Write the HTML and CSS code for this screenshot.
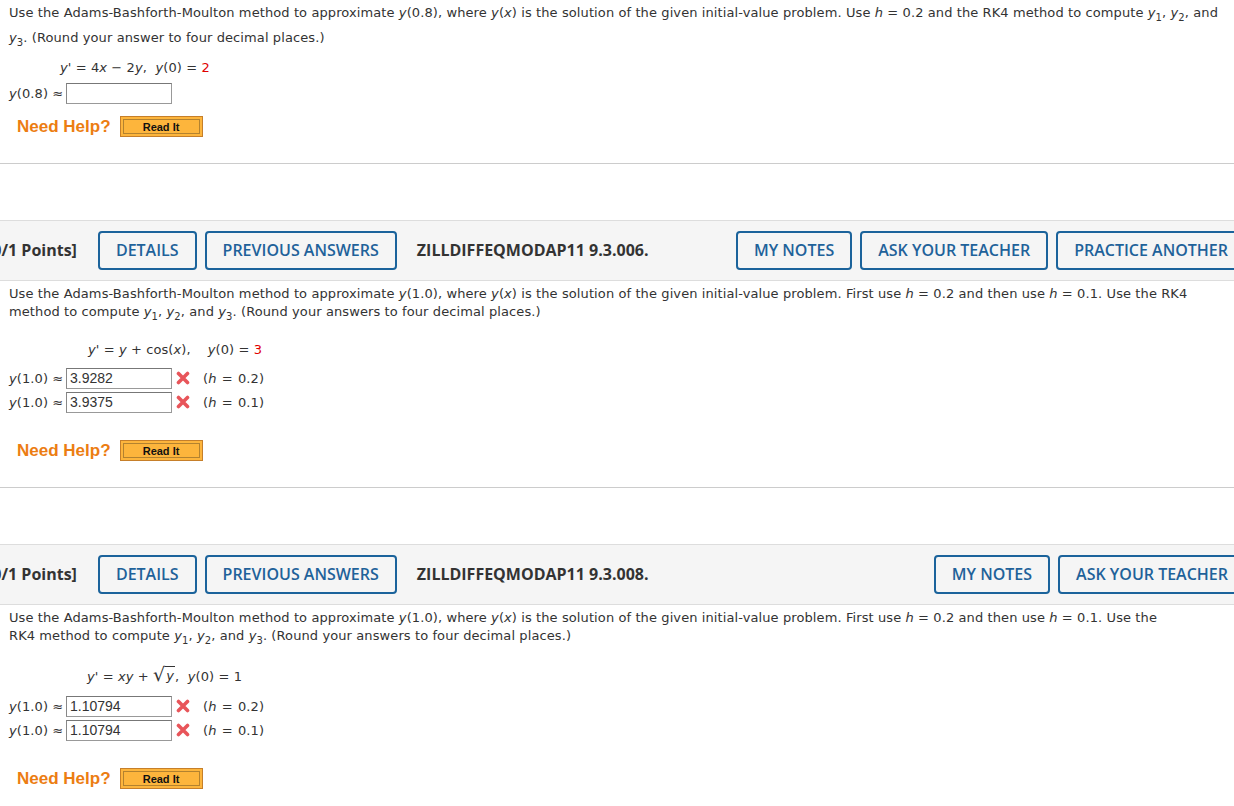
FILE: index.html
```html
<!DOCTYPE html>
<html>
<head>
<meta charset="utf-8">
<link rel="stylesheet" href="styles.css">
</head>
<body>
<div class="page">

  <section class="question q-first">
    <p class="prompt prompt-tall">Use the Adams-Bashforth-Moulton method to approximate <i>y</i>(0.8), where <i>y</i>(<i>x</i>) is the solution of the given initial-value problem. Use <i>h</i> = 0.2 and the RK4 method to compute <i>y</i><sub>1</sub>, <i>y</i><sub>2</sub>, and<br><i>y</i><sub>3</sub>. (Round your answer to four decimal places.)</p>
    <div class="equation eq-1"><i>y</i>' = 4<i>x</i> &minus; 2<i>y</i>,&nbsp; <i>y</i>(0) = <span class="given">2</span></div>
    <div class="answer-row row-first">
      <span class="lbl"><i>y</i>(0.8) &asymp;</span>
      <input class="field" type="text" value="">
    </div>
    <div class="help">
      <span class="help-title">Need Help?</span>
      <span class="read-it"><span class="read-inner">Read It</span></span>
    </div>
  </section>

  <div class="band">
    <span class="points">[0/1 Points]</span>
    <span class="btn">DETAILS</span>
    <span class="btn">PREVIOUS ANSWERS</span>
    <span class="code">ZILLDIFFEQMODAP11 9.3.006.</span>
    <span class="btn push">MY NOTES</span>
    <span class="btn">ASK YOUR TEACHER</span>
    <span class="btn">PRACTICE ANOTHER</span>
  </div>

  <section class="question">
    <p class="prompt">Use the Adams-Bashforth-Moulton method to approximate <i>y</i>(1.0), where <i>y</i>(<i>x</i>) is the solution of the given initial-value problem. First use <i>h</i> = 0.2 and then use <i>h</i> = 0.1. Use the RK4<br>method to compute <i>y</i><sub>1</sub>, <i>y</i><sub>2</sub>, and <i>y</i><sub>3</sub>. (Round your answers to four decimal places.)</p>
    <div class="equation eq-2"><i>y</i>' = <i>y</i> + cos(<i>x</i>), &nbsp;&nbsp;&nbsp;<i>y</i>(0) = <span class="given">3</span></div>
    <div class="answers">
      <div class="answer-row">
        <span class="lbl"><i>y</i>(1.0) &asymp;</span>
        <input class="field" type="text" value="3.9282">
        <svg class="wrong" width="14" height="14" viewBox="0 0 14 14"><path d="M2.5 2.5 L11.5 11.5 M11.5 2.5 L2.5 11.5" stroke="#e8555a" stroke-width="3.6" stroke-linecap="round"/></svg>
        <span class="hint">(<i>h</i> = 0.2)</span>
      </div>
      <div class="answer-row">
        <span class="lbl"><i>y</i>(1.0) &asymp;</span>
        <input class="field" type="text" value="3.9375">
        <svg class="wrong" width="14" height="14" viewBox="0 0 14 14"><path d="M2.5 2.5 L11.5 11.5 M11.5 2.5 L2.5 11.5" stroke="#e8555a" stroke-width="3.6" stroke-linecap="round"/></svg>
        <span class="hint">(<i>h</i> = 0.1)</span>
      </div>
    </div>
    <div class="help">
      <span class="help-title">Need Help?</span>
      <span class="read-it"><span class="read-inner">Read It</span></span>
    </div>
  </section>

  <div class="band">
    <span class="points">[0/1 Points]</span>
    <span class="btn">DETAILS</span>
    <span class="btn">PREVIOUS ANSWERS</span>
    <span class="code">ZILLDIFFEQMODAP11 9.3.008.</span>
    <span class="btn push">MY NOTES</span>
    <span class="btn">ASK YOUR TEACHER</span>
  </div>

  <section class="question q-last">
    <p class="prompt">Use the Adams-Bashforth-Moulton method to approximate <i>y</i>(1.0), where <i>y</i>(<i>x</i>) is the solution of the given initial-value problem. First use <i>h</i> = 0.2 and then use <i>h</i> = 0.1. Use the<br>RK4 method to compute <i>y</i><sub>1</sub>, <i>y</i><sub>2</sub>, and <i>y</i><sub>3</sub>. (Round your answers to four decimal places.)</p>
    <div class="equation eq-3"><i>y</i>' = <i>xy</i> + <span class="sqrt"><span class="radical">&radic;</span><span class="radicand"><i>y</i></span></span>,&nbsp; <i>y</i>(0) = 1</div>
    <div class="answers answers-3">
      <div class="answer-row">
        <span class="lbl"><i>y</i>(1.0) &asymp;</span>
        <input class="field" type="text" value="1.10794">
        <svg class="wrong" width="14" height="14" viewBox="0 0 14 14"><path d="M2.5 2.5 L11.5 11.5 M11.5 2.5 L2.5 11.5" stroke="#e8555a" stroke-width="3.6" stroke-linecap="round"/></svg>
        <span class="hint">(<i>h</i> = 0.2)</span>
      </div>
      <div class="answer-row">
        <span class="lbl"><i>y</i>(1.0) &asymp;</span>
        <input class="field" type="text" value="1.10794">
        <svg class="wrong" width="14" height="14" viewBox="0 0 14 14"><path d="M2.5 2.5 L11.5 11.5 M11.5 2.5 L2.5 11.5" stroke="#e8555a" stroke-width="3.6" stroke-linecap="round"/></svg>
        <span class="hint">(<i>h</i> = 0.1)</span>
      </div>
    </div>
    <div class="help">
      <span class="help-title">Need Help?</span>
      <span class="read-it"><span class="read-inner">Read It</span></span>
    </div>
  </section>

</div>
</body>
</html>
```

FILE: styles.css
```css
html, body {
  margin: 0;
  padding: 0;
  background: #ffffff;
}

body {
  font-family: "DejaVu Sans", Verdana, sans-serif;
  font-size: 13px;
  letter-spacing: 0.1px;
  color: #333333;
  overflow: hidden;
  width: 1234px;
  height: 806px;
}

.page {
  width: 1234px;
}

.question {
  padding: 0 0 0 9px;
  border-bottom: 1px solid #cccccc;
  margin-bottom: 56px;
}

.q-last {
  border-bottom: none;
  margin-bottom: 0;
}

.prompt {
  margin: 4px 0 0 0;
  line-height: 18px;
  white-space: nowrap;
}

.prompt-tall {
  margin-top: 0;
  line-height: 25px;
}

sub {
  font-size: 10px;
  line-height: 0;
  vertical-align: -4px;
}

i {
  font-style: italic;
}

.equation {
  line-height: 18px;
  white-space: nowrap;
}

.eq-1 {
  margin: 9px 0 0 51px;
}

.eq-2 {
  margin: 20px 0 0 79px;
}

.eq-3 {
  margin: 19px 0 0 78px;
  line-height: 22px;
}

.given {
  color: #e00000;
}

.sqrt {
  display: inline-flex;
  align-items: flex-end;
}

.radical {
  font-size: 19px;
  line-height: 20px;
}

.radicand {
  border-top: 1px solid #333333;
  padding: 1px 1px 0 1px;
  line-height: 16px;
}

.answers {
  margin-top: 7px;
}

.answers-3 {
  margin-top: 6px;
}

.answer-row {
  display: flex;
  align-items: center;
  height: 24px;
}

.row-first {
  margin-top: 4px;
}

.lbl {
  white-space: nowrap;
  width: 57px;
}

.field {
  box-sizing: border-box;
  width: 106px;
  height: 21px;
  margin: 0;
  padding: 0 3px;
  border: 1px solid #999999;
  border-top-color: #777777;
  border-left-color: #888888;
  border-radius: 0;
  font-family: "Liberation Sans", Arial, sans-serif;
  font-size: 14px;
  letter-spacing: 0;
  color: #333333;
  background: #ffffff;
}

.wrong {
  margin-left: 4px;
  flex: none;
}

.hint {
  margin-left: 13px;
  white-space: nowrap;
  word-spacing: 1px;
}

.help {
  display: flex;
  align-items: center;
  margin: 11px 0 26px 8px;
  height: 21px;
}

.answers + .help {
  margin-top: 26px;
}

.help-title {
  font-family: "Liberation Sans", Arial, sans-serif;
  font-weight: bold;
  font-size: 17px;
  letter-spacing: 0;
  color: #ec7d12;
  margin-right: 9px;
}

.read-it {
  box-sizing: border-box;
  width: 83px;
  height: 21px;
  border: 1px solid #c67f2a;
  background: #fdb53c;
  padding: 2px;
  display: flex;
}

.read-inner {
  flex: 1;
  border: 1px solid #b3822f;
  display: flex;
  align-items: center;
  justify-content: center;
  font-family: "Liberation Sans", Arial, sans-serif;
  font-weight: bold;
  font-size: 11px;
  letter-spacing: 0;
  color: #111111;
}

.band {
  display: flex;
  align-items: center;
  gap: 8px;
  height: 58px;
  padding-bottom: 1px;
  box-sizing: content-box;
  background: #f5f5f5;
  border-top: 1px solid #dddddd;
  border-bottom: 1px solid #dddddd;
  margin-left: -13px;
  margin-right: -12px;
  font-family: "Open Sans", "Liberation Sans", sans-serif;
  font-size: 16px;
  letter-spacing: 0;
}

.points {
  font-weight: 700;
  color: #333333;
  margin-right: 13px;
  white-space: nowrap;
}

.btn {
  box-sizing: border-box;
  height: 39px;
  padding: 0 16px;
  border: 2px solid #1b639b;
  border-radius: 4px;
  color: #1f629a;
  font-weight: 600;
  display: flex;
  align-items: center;
  white-space: nowrap;
  background: #f5f5f5;
}

.code {
  font-weight: 700;
  color: #333333;
  margin-left: 12px;
  white-space: nowrap;
}

.push {
  margin-left: auto;
}
```
